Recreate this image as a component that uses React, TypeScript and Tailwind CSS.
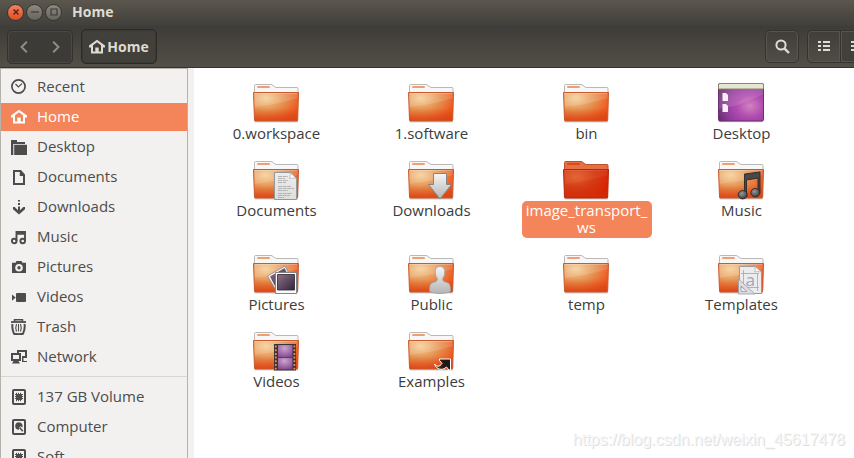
import type { ReactNode } from "react";

const HomeIcon = ({ className = "" }: { className?: string }) => (
  <svg viewBox="0 0 16 16" className={"h-4 w-4 shrink-0 " + className} fill="currentColor">
    <path fillRule="evenodd" d="M8 .8 16 6.4V8.6h-2V14.4H2V8.600H0V6.400ZM8 3.200 4 6.200v6.200h2.300V8.400h3.400v4H12V6.200Z" />
  </svg>
);

const glyphs: Record<string, ReactNode> = {
  recent: (
    <>
      <circle cx="7.500" cy="7.500" r="6.600" fill="none" stroke="currentColor" strokeWidth="1.700" />
      <path d="M4.500 5 7.400 8 11 4.600" fill="none" stroke="currentColor" strokeWidth="1.200" />
    </>
  ),
  desktop: <path d="M0 1h6v2h8v2H2.300v11H0ZM3.200 5.800H16V16H3.200Z" />,
  documents: <path fillRule="evenodd" d="M2 1h8l4 4.500V16H2ZM4 3v11h8V7H8.800V3Z" />,
  downloads: (
    <path d="M7 1h2v1.500H7ZM7 4h2v2H7ZM7 7.500h2v3.800L12.300 8H14v2.200L8 15.500 2 10.200V8h1.700L7 11.300Z" />
  ),
  music: (
    <g fill="none" stroke="currentColor" strokeWidth="1.900">
      <circle cx="3.200" cy="12" r="2.300" />
      <circle cx="11.700" cy="12" r="2.300" />
      <path d="M5.500 12V3H14v9M5.500 4.800H14" />
    </g>
  ),
  pictures: (
    <path fillRule="evenodd" d="M5.500 2h5l1 1.800H15V14H1V3.800h3.500ZM8 5a3.800 3.800 0 1 0 0 7.600A3.800 3.800 0 0 0 8 5Zm0 2.100a1.700 1.700 0 1 1 0 3.400 1.700 1.700 0 0 1 0-3.400Z" />
  ),
  videos: <path d="M1 5.500 4.700 8.500 1 11.800ZM6 4h8q1 0 1 1v7q0 1-1 1H6q-1 0-1-1V5q0-1 1-1Z" />,
  trash: (
    <g fill="none" stroke="currentColor">
      <path d="M3.500 2.500V.8h8v1.700" strokeWidth="1.500" />
      <path d="M0 3h15" strokeWidth="1.800" />
      <path d="M1.500 5q-.8 5 1.500 9.700 4.500 1 9 0Q14.300 10 13.500 5" strokeWidth="2" />
      <path d="M5.500 5q-1.400 3.700 0 7.500M7.500 5v7.500M9.500 5q1.400 3.700 0 7.500" strokeWidth="1.100" />
    </g>
  ),
  network: (
    <g>
      <path fillRule="evenodd" d="M6 1h10v8h-3.500V12H16v1h-5V7h3V3H8v1H6Z" />
      <path fillRule="evenodd" d="M0 4h10v8H7.500l1.500 2.500H1L2.500 12H0ZM2 6v4h6V6Z" />
    </g>
  ),
  volume: (
    <>
      <rect x="2" y="1" width="12" height="14" rx="1" fill="none" stroke="currentColor" strokeWidth="2" />
      <rect x="5" y="5" width="6" height="6" />
      <path d="M4 5.500h8M4 7.500h8M4 9.500h8M5.500 3.800v8.400M7.500 3.800v8.400M9.500 3.800v8.400" stroke="currentColor" strokeWidth="1" />
    </>
  ),
  computer: (
    <>
      <rect x="2" y="1" width="12" height="14" rx="1" fill="none" stroke="currentColor" strokeWidth="2" />
      <path fillRule="evenodd" d="M8 3.200a3.700 3.700 0 0 1 3.300 5.200L9.600 7.300 8 8.600v2.200A3.800 3.800 0 1 1 8 3.200Z" />
      <path d="m8.500 8.500 3.300 3.700" stroke="currentColor" strokeWidth="1.600" />
    </>
  ),
};

const places = [
  { name: "Recent", icon: "recent" },
  { name: "Home", icon: "home" },
  { name: "Desktop", icon: "desktop" },
  { name: "Documents", icon: "documents" },
  { name: "Downloads", icon: "downloads" },
  { name: "Music", icon: "music" },
  { name: "Pictures", icon: "pictures" },
  { name: "Videos", icon: "videos" },
  { name: "Trash", icon: "trash" },
  { name: "Network", icon: "network" },
];

const devices = [
  { name: "137 GB Volume", icon: "volume" },
  { name: "Computer", icon: "computer" },
  { name: "Soft", icon: "volume" },
];

function Place({ name, icon }: { name: string; icon: string }) {
  const active = name === "Home";
  return (
    <li>
      <a
        href={"#" + icon}
        className={
          "flex h-7 items-center gap-[10px] pl-[10px] text-[15px] leading-5 " +
          (active ? "bg-[#f48459] text-white" : "text-[#4c4c4c]")
        }
      >
        {icon === "home" ? (
          <HomeIcon />
        ) : (
          <svg viewBox="0 0 16 16" className="h-4 w-4 shrink-0" fill="currentColor">
            {glyphs[icon]}
          </svg>
        )}
        <span className="pb-0.5 whitespace-nowrap">{name}</span>
      </a>
    </li>
  );
}

// gradients shared by every icon in the grid
function Gradients() {
  return (
    <svg className="absolute h-0 w-0" aria-hidden="true">
      <defs>
        <radialGradient id="folder" cx="0.27" cy="0.2" r="0.9">
          <stop offset="0" stopColor="#f5cf98" />
          <stop offset="0.5" stopColor="#e58e4c" />
          <stop offset="0.85" stopColor="#ee5a22" />
          <stop offset="1" stopColor="#e65018" />
        </radialGradient>
        <radialGradient id="folderOn" cx="0.28" cy="0.25" r="0.85">
          <stop offset="0" stopColor="#e35c28" />
          <stop offset="0.5" stopColor="#d43a12" />
          <stop offset="1" stopColor="#db1d00" />
        </radialGradient>
        <linearGradient id="shade" x1="0" y1="0" x2="0" y2="1">
          <stop offset="0.55" stopColor="#cc3c10" stopOpacity="0" />
          <stop offset="1" stopColor="#cc3c10" stopOpacity="0.5" />
        </linearGradient>
        <linearGradient id="gray" x1="0" y1="0" x2="0" y2="1">
          <stop offset="0" stopColor="#f6f6f6" />
          <stop offset="1" stopColor="#b4b4b4" />
        </linearGradient>
        <linearGradient id="paper" x1="0" y1="0" x2="0" y2="1">
          <stop offset="0" stopColor="#ededed" />
          <stop offset="1" stopColor="#dedede" />
        </linearGradient>
        <radialGradient id="purple" cx="0.7" cy="0.6" r="0.75">
          <stop offset="0" stopColor="#d183c0" />
          <stop offset="0.4" stopColor="#b04bb0" />
          <stop offset="0.75" stopColor="#8f3d98" />
          <stop offset="1" stopColor="#66306f" />
        </radialGradient>
        <linearGradient id="photo" x1="0" y1="0" x2="1" y2="1">
          <stop offset="0" stopColor="#8e7088" />
          <stop offset="1" stopColor="#30263c" />
        </linearGradient>
        <radialGradient id="film" cx="0.45" cy="0.25" r="0.8">
          <stop offset="0" stopColor="#cfa5d0" />
          <stop offset="1" stopColor="#81458c" />
        </radialGradient>
        <radialGradient id="note" cx="0.4" cy="0.35" r="0.7">
          <stop offset="0" stopColor="#999" />
          <stop offset="1" stopColor="#373737" />
        </radialGradient>
        <linearGradient id="arrow" x1="0" y1="0" x2="1" y2="0">
          <stop offset="0" stopColor="#7d3c25" />
          <stop offset="0.6" stopColor="#201815" />
        </linearGradient>
      </defs>
    </svg>
  );
}

const emblems: Record<string, ReactNode> = {
  Documents: (
    <g>
      <path d="M21.500 15.500H37l6.500 6v21h-22Z" fill="url(#paper)" stroke="#979797" />
      <path d="M37 15.500q1 4-.5 6 3-1 7 0Z" fill="#fff" stroke="#aaa" strokeWidth=".7" />
      <path d="M25 19.500h10M25 21.500h7M25 23.500h10M25 25.500h8M25 29.500h13M25 31.500h16M25 33.500h10M25 36.500h14M25 38.500h12M25 40.500h6" stroke="#a6a6a6" strokeWidth=".8" strokeDasharray="4 .6" />
    </g>
  ),
  Downloads: (
    <path d="M25.500 16.500h13v11h5L32 42 20.500 27.500h5Z" fill="url(#gray)" stroke="#858585" />
  ),
  Music: (
    <g fill="url(#note)" stroke="#292929" strokeWidth=".9">
      <path d="M26.500 17 42 15v21h-2V21l-11.500 2v15h-2Z" fill="#484848" />
      <ellipse cx="24.700" cy="37.700" rx="4.500" ry="4.200" />
      <ellipse cx="37.300" cy="35.700" rx="4.500" ry="4.200" />
    </g>
  ),
  Pictures: (
    <g>
      <path d="M14.500 25 32 15l9 17-17 9Z" fill="#f5f5f5" stroke="#858585" strokeWidth=".8" />
      <path d="M17 25.500 31.500 17l7 14-15 7Z" fill="url(#photo)" />
      <path d="M22.500 21.500h21v21h-21Z" fill="#fafafa" stroke="#858585" />
      <path d="M24.500 23.500h17v15.500h-17Z" fill="url(#photo)" stroke="#292333" strokeWidth=".8" />
    </g>
  ),
  Public: (
    <path
      d="M32 15.500c3.200 0 5 2.200 4.800 5.500-.1 3-.8 4.500-1.800 6-.6 1.200-.3 3 1.200 3.600l4 1.400c1.800.7 2.300 4 2.300 8-2.500 3.300-18.500 3.300-21 0 0-4 .5-7.300 2.300-8l4-1.400c1.500-.6 1.800-2.400 1.200-3.600-1-1.500-1.700-3-1.800-6-.2-3.300 1.600-5.500 4.800-5.500Z"
      fill="url(#gray)"
      stroke="#a3a3a3"
      strokeWidth=".9"
    />
  ),
  Templates: (
    <g>
      <path d="M21.500 15.500H37l6.500 5.500v21.500h-22Z" fill="#ececee" stroke="#9b9b9f" />
      <path d="M37 15.500q1 4-.5 5.500 3-1 7 0Z" fill="#fff" stroke="#aaa" strokeWidth=".7" />
      <path d="M23 22.500h18M23 36.500h18M25.500 19v19M39.500 22v18" stroke="#a9abb9" strokeWidth=".9" />
      <text x="27.500" y="35" fontSize="17" fill="#a4a8b9" fontFamily="Noto Sans, sans-serif">a</text>
      <path fillRule="evenodd" d="M20.500 28 37 43H20.500ZM23 35v5.500h6Z" fill="#dcdce2" stroke="#9899a5" strokeWidth=".8" />
    </g>
  ),
  Videos: (
    <g>
      <path d="M21 16h22v26.500H21Z" fill="#363337" />
      <path d="M25 17h14.500v12.500H25Z" fill="url(#film)" />
      <path d="M25 30h14.500v11.500H25Z" fill="url(#film)" />
      <path d="M22.800 17.500v24M41.400 17.500v24" stroke="#e78e54" strokeWidth="1.800" strokeDasharray="2 1.700" />
    </g>
  ),
  Examples: (
    <path
      d="M26.500 36c2 3 5 3 7.500-.5l-2.500-3V31h11v11H41l-2.500-3c-4 3.800-10 3-12-3Z"
      fill="url(#arrow)"
      stroke="#fff"
      strokeWidth="1"
    />
  ),
};

function FolderIcon({ name, selected }: { name: string; selected?: boolean }) {
  if (name === "Desktop") {
    return (
      <svg viewBox="0 0 47 44" className="h-11 w-[47px]">
        <path d="M1 41.500h44" stroke="#000" strokeOpacity=".2" strokeWidth="1.500" />
        <rect x=".5" y="3.500" width="45" height="37.500" rx="1.500" fill="url(#purple)" stroke="#6b2d74" />
        <path d="M1 9.500h44v5L20 25 1 29Z" fill="#fff" opacity=".12" />
        <path d="M.5 9V5q0-1.500 1.500-1.500h42q1.500 0 1.500 1.500v4Z" fill="#e7e6d5" stroke="#8b8a68" />
        <path d="M4.500 13H8l2 2v6H4.500ZM4.500 24H8l2 2v6H4.500Z" fill="#f4f1f4" />
      </svg>
    );
  }
  return (
    <svg viewBox="0 0 47 44" className="h-11 w-[47px]">
      <path d="M1.500 41.800h43.500" stroke="#000" strokeOpacity=".18" strokeWidth="1.500" />
      <path
        d="M1.500 14V5.500q0-1 1-1H18q1 0 2 1l2 1.500q.8.500 2 .500h20q1 0 1 1V14Z"
        fill={selected ? "#e57044" : "#f7f7f7"}
        stroke={selected ? "#b9512f" : "#b9b9b9"}
      />
      <path d="M5 7H16" stroke={selected ? "#e24716" : "#f0a070"} strokeWidth="2" strokeLinecap="round" />
      <path d="M.5 12.500h45L44.700 40q0 1-1 1H2.500q-1 0-1-1Z" fill={selected ? "url(#folderOn)" : "url(#folder)"} />
      <path d="M.5 12.500h45L44.700 40q0 1-1 1H2.500q-1 0-1-1Z" fill="url(#shade)" stroke={selected ? "#b32808" : "#c85a30"} />
      <path d="M1.500 13.500h43V18Q27 24 1.800 27Z" fill="#fff" opacity={selected ? ".06" : ".14"} />
      <path d="M1.500 13.500h43" stroke="#fff" strokeOpacity={selected ? ".12" : ".3"} />
      {emblems[name]}
    </svg>
  );
}

const files = [
  "0.workspace",
  "1.software",
  "bin",
  "Desktop",
  "Documents",
  "Downloads",
  "image_transport_ws",
  "Music",
  "Pictures",
  "Public",
  "temp",
  "Templates",
  "Videos",
  "Examples",
];

function FileItem({ name }: { name: string }) {
  const selected = name === "image_transport_ws";
  return (
    <button type="button" className="flex flex-col items-center justify-start">
      <FolderIcon name={name} selected={selected} />
      <span
        className={
          "rounded-[5px] px-[3px] pt-px pb-0.5 text-[15px] leading-[17px] " +
          (selected ? "w-[130px] bg-[#f48459] text-white" : "text-[#3c3c3c]")
        }
      >
        {selected ? (
          <>
            image_transport_
            <wbr />
            ws
          </>
        ) : (
          name
        )}
      </span>
    </button>
  );
}

const windowButton =
  "flex h-[17px] w-[17px] items-center justify-center rounded-full border border-[#37352f]";
const toolButton =
  "flex items-center justify-center border border-[#35332e] text-[#dfdbd2] shadow-[inset_0_0_0_1px_#58554d]";

function ListGlyph() {
  return (
    <svg viewBox="0 0 12 11" className="h-[11px] w-3" fill="currentColor">
      <path d="M0 0h3v2H0ZM5 0h7v2H5ZM0 4h3v2H0ZM5 4h7v2H5ZM0 8h3v2H0ZM5 8h7v2H5Z" />
    </svg>
  );
}

function App() {
  return (
    <div className="relative flex h-screen flex-col overflow-hidden bg-white font-['Open_Sans','Noto_Sans',sans-serif]">
      <Gradients />
      <header className="shrink-0">
        <div className="flex h-[26px] items-center gap-0.5 bg-linear-to-b from-[#5b574e] to-[#413f3a] pb-0.5 pl-[7px]">
          <button type="button" aria-label="Close" className={windowButton + " bg-linear-to-b from-[#f58060] to-[#df4d1c] text-[#5b2410]"}>
            <svg viewBox="0 0 8 8" className="h-2 w-2" stroke="currentColor" strokeWidth="1.500">
              <path d="m1.500 1.500 5 5m0-5-5 5" />
            </svg>
          </button>
          <button type="button" aria-label="Minimize" className={windowButton + " bg-linear-to-b from-[#8b8980] to-[#66645d] text-[#3c3b37]"}>
            <svg viewBox="0 0 8 8" className="h-2 w-2" stroke="currentColor" strokeWidth="1.200">
              <path d="M0 4h8" />
            </svg>
          </button>
          <button type="button" aria-label="Maximize" className={windowButton + " bg-linear-to-b from-[#8b8980] to-[#66645d] text-[#3c3b37]"}>
            <svg viewBox="0 0 8 8" className="h-2 w-2" stroke="currentColor" fill="none" strokeWidth="1.200">
              <path d="M1 1h6v6H1Z" />
            </svg>
          </button>
          <h1 className="ml-2 text-sm font-bold text-[#dfdbd2]">Home</h1>
        </div>
        <div className="flex h-[42px] items-center gap-2 overflow-hidden border-b border-[#35332e] bg-linear-to-b from-[#3e3c38] to-[#524f47] pl-[7px]">
          <div className="flex h-[34px] w-[66px] shrink-0 rounded-[5px] border border-[#33312d] bg-[#3d3b37] text-[#8f8c84] shadow-[inset_0_0_0_1px_#4b4942]">
            <button type="button" aria-label="Back" className="flex flex-1 items-center justify-center">
              <svg viewBox="0 0 8 12" className="h-3 w-2" fill="none" stroke="currentColor" strokeWidth="2">
                <path d="M6.800.700 1.500 6l5.300 5.300" />
              </svg>
            </button>
            <button type="button" aria-label="Forward" className="flex flex-1 items-center justify-center">
              <svg viewBox="0 0 8 12" className="h-3 w-2" fill="none" stroke="currentColor" strokeWidth="2">
                <path d="M1.200.700 6.500 6l-5.300 5.300" />
              </svg>
            </button>
          </div>
          <button type="button" className="flex h-[35px] w-[76px] shrink-0 items-center justify-center gap-0.5 rounded-[5px] border border-[#2c2a26] bg-[#42403a] text-sm font-bold text-[#dfdbd2] shadow-[inset_0_0_0_1px_#3b3934]">
            <HomeIcon />
            Home
          </button>
          <button type="button" aria-label="Search" className={toolButton + " ml-auto h-[33px] w-[34px] shrink-0 rounded-[5px]"}>
            <svg viewBox="0 0 15 15" className="h-[15px] w-[15px]" fill="none" stroke="currentColor">
              <circle cx="6" cy="6" r="4.600" strokeWidth="2" />
              <path d="m9.300 9.300 4.700 4.700" strokeWidth="2.400" />
            </svg>
          </button>
          <div className="-mr-5 flex h-[33px] shrink-0">
            <button type="button" aria-label="List view" className={toolButton + " w-[34px] rounded-l-[5px]"}>
              <ListGlyph />
            </button>
            <button type="button" aria-label="Compact view" className={toolButton + " w-[33px] rounded-r-[5px] border-l-0 bg-[#42403a]"}>
              <ListGlyph />
            </button>
          </div>
        </div>
      </header>

      <div className="flex min-h-0 flex-1">
        <nav className="w-[188px] shrink-0 overflow-hidden border-x border-t border-[#b5b1ab] bg-[#f2f1f0] pt-1">
          <ul className="flex flex-col gap-0.5">
            {places.map((p) => (
              <Place key={p.name} {...p} />
            ))}
          </ul>
          <hr className="mt-[5px] mb-1.5 border-[#d8d6d3]" />
          <ul className="flex flex-col gap-0.5">
            {devices.map((p) => (
              <Place key={p.name} {...p} />
            ))}
          </ul>
        </nav>
        <div className="w-1.5 shrink-0 bg-[#f2f1f0]" />
        <main className="grid flex-1 grid-cols-[repeat(auto-fill,155px)] content-start gap-y-[13px] pt-3 pl-[5px]">
          {files.map((name) => (
            <FileItem key={name} name={name} />
          ))}
        </main>
      </div>

      <p className="pointer-events-none absolute right-[9px] bottom-1.5 font-['Liberation_Sans',Arial,sans-serif] text-base leading-6 text-[#f7f7f7] [text-shadow:1px_1px_0_#dedede]">
        https://blog.csdn.net/weixin_45617478
      </p>
    </div>
  );
}

export default App;
